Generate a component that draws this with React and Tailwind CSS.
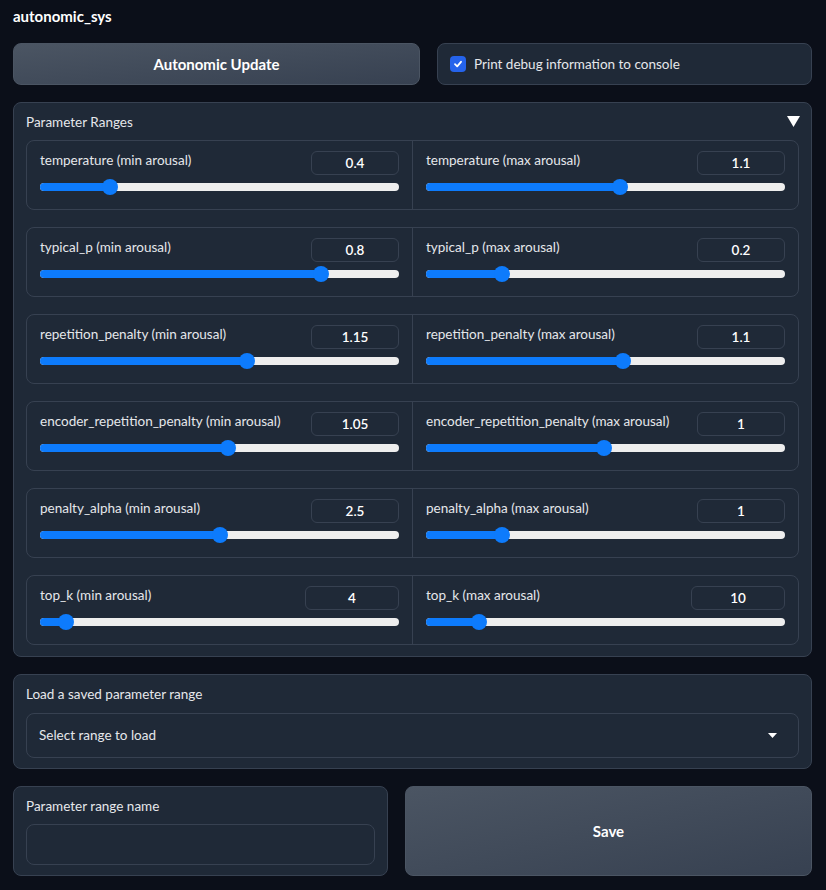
import React from 'react';

const rows = [
    { name: 'temperature', min: { v: '0.4', p: 0.194 }, max: { v: '1.1', p: 0.539 } },
    { name: 'typical_p', min: { v: '0.8', p: 0.784 }, max: { v: '0.2', p: 0.211 } },
    { name: 'repetition_penalty', min: { v: '1.15', p: 0.576 }, max: { v: '1.1', p: 0.55 } },
    { name: 'encoder_repetition_penalty', min: { v: '1.05', p: 0.524 }, max: { v: '1', p: 0.497 } },
    { name: 'penalty_alpha', min: { v: '2.5', p: 0.501 }, max: { v: '1', p: 0.211 } },
    { name: 'top_k', min: { v: '4', p: 0.072 }, max: { v: '10', p: 0.147 }, wide: true },
];

const Slider = ({ pct }) => (
    <div className="relative h-2 mt-2 rounded-full bg-[#eeeeee]">
        <div className="absolute left-0 top-0 h-2 rounded-full bg-[#0d7bfc]" style={{ width: `${pct * 100}%` }} />
        <div
            className="absolute top-1/2 w-4 h-4 -mt-2 -ml-2 rounded-full bg-[#0d7bfc]"
            style={{ left: `${pct * 100}%` }}
        />
    </div>
);

const Half = ({ label, data, wide, divider }) => (
    <div className={`flex-1 px-[13px] pt-[10px] pb-[18px] ${divider ? 'border-l border-[#374151]' : ''}`}>
        <div className="flex justify-between items-start">
            <span className="leading-[18px] text-[13.5px] text-[#e5e7eb]">{label}</span>
            <div
                className={`h-6 ${wide ? 'w-[94px]' : 'w-[88px]'} rounded-md border border-[#374151] flex items-center justify-center text-[13.5px] font-semibold text-white`}
            >
                {data.v}
            </div>
        </div>
        <Slider pct={data.p} />
    </div>
);

const App = () => {
    return (
        <div
            className="min-h-screen w-[826px] bg-[#0b0f19] pl-[13px] pr-[14px] pt-[6px] pb-[14px] text-[#e5e7eb]"
            style={{ fontFamily: 'Lato, "Open Sans", sans-serif' }}
        >
            {/* Title */}
            <div className="h-[37px] text-[15px] font-bold text-white leading-5">autonomic_sys</div>

            {/* Top row */}
            <div className="flex gap-[17px] h-[42px]">
                <button className="w-[407px] rounded-lg border border-[#4b5563] bg-gradient-to-br from-[#4b5563] to-[#374151] text-white font-bold text-[15px]">
                    Autonomic Update
                </button>
                <div className="flex-1 rounded-lg border border-[#374151] bg-[#1f2937] flex items-center px-[12px] gap-2">
                    <div className="w-4 h-4 rounded-[4px] bg-[#2563eb] flex items-center justify-center">
                        <svg width="10" height="10" viewBox="0 0 10 10">
                            <path d="M2 5.2 L4.2 7.3 L8 2.8" stroke="white" strokeWidth="1.8" fill="none" strokeLinecap="round" strokeLinejoin="round" />
                        </svg>
                    </div>
                    <span className="text-[13.5px] text-[#e5e7eb]">Print debug information to console</span>
                </div>
            </div>

            {/* Parameter Ranges accordion */}
            <div className="mt-[17px] rounded-lg border border-[#374151] bg-[#1f2937] px-[12px] pt-[9px] pb-[11px]">
                <div className="flex justify-between items-center h-5 mb-[8px]">
                    <span className="text-[13.5px] text-[#e5e7eb]">Parameter Ranges</span>
                    <svg width="13" height="11" viewBox="0 0 13 11" className="mr-[-1px] -mt-[2px]">
                        <polygon points="0,0 13,0 6.5,11" fill="white" />
                    </svg>
                </div>
                <div className="flex flex-col gap-[17px]">
                    {rows.map((r) => (
                        <div key={r.name} className="flex rounded-lg border border-[#374151]">
                            <Half label={`${r.name} (min arousal)`} data={r.min} wide={r.wide} />
                            <Half label={`${r.name} (max arousal)`} data={r.max} wide={r.wide} divider />
                        </div>
                    ))}
                </div>
            </div>

            {/* Load saved */}
            <div className="mt-[17px] rounded-lg border border-[#374151] bg-[#1f2937] px-[12px] pt-[9px] pb-[10px]">
                <div className="h-5 leading-5 text-[13.5px] text-[#e5e7eb] mb-[9px]">Load a saved parameter range</div>
                <div className="h-[45px] rounded-lg border border-[#374151] flex items-center justify-between px-[12px]">
                    <span className="text-[13.5px] text-[#e5e7eb]">Select range to load</span>
                    <svg width="9" height="5" viewBox="0 0 9 5" className="mr-[9px]">
                        <polygon points="0,0 9,0 4.5,5" fill="white" />
                    </svg>
                </div>
            </div>

            {/* Bottom row */}
            <div className="mt-[17px] flex gap-[17px] h-[90px]">
                <div className="w-[375px] rounded-lg border border-[#374151] bg-[#1f2937] px-[12px] pt-[9px]">
                    <div className="h-5 leading-5 text-[13.5px] text-[#e5e7eb] mb-[8px]">Parameter range name</div>
                    <div className="h-[41px] rounded-lg border border-[#374151] bg-[#1f2937]" />
                </div>
                <button className="flex-1 rounded-lg border border-[#4b5563] bg-gradient-to-br from-[#4b5563] to-[#374151] text-white font-bold text-[15px]">
                    Save
                </button>
            </div>
        </div>
    );
};

export default App;
